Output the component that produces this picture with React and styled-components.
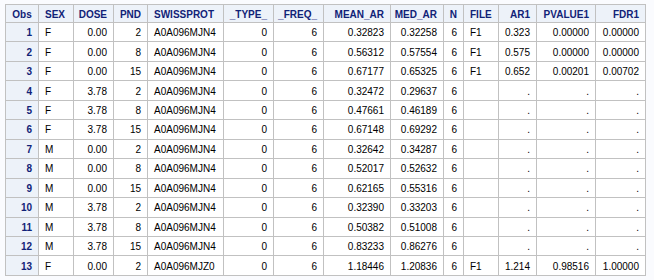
import React from "react";
import styled, { createGlobalStyle } from "styled-components";

const Global = createGlobalStyle`
  html, body { margin: 0; padding: 0; background: #fafbfe; }
  body { font-family: "Liberation Sans", Arial, sans-serif; }
`;

const Page = styled.div`
  padding: 4px 5px;
`;

const Table = styled.div`
  display: grid;
  grid-template-columns: 33px 35px 40px 34px 76px 50px 50px 67px 53px 20px 35px 38px 59px 50px;
  grid-template-rows: 18px repeat(13, 19.46px);
  width: max-content;
  border-left: 1px solid #c1c1c1;
  border-top: 1px solid #c1c1c1;
  background: #ffffff;
`;

const Cell = styled.div`
  box-sizing: border-box;
  border-right: 1px solid #c1c1c1;
  border-bottom: 1px solid #c1c1c1;
  display: flex;
  align-items: center;
  justify-content: ${(p) =>
    p.$align === "left" ? "flex-start" : p.$align === "center" ? "center" : "flex-end"};
  padding: 1px 6px 0 6px;
  font-size: 10px;
  white-space: nowrap;
  overflow: hidden;
  background: ${(p) => (p.$head ? "#edf2f9" : "#ffffff")};
  color: ${(p) => (p.$head ? "#112277" : "#000000")};
  font-weight: ${(p) => (p.$head ? "bold" : "normal")};
`;

const columns = [
  { key: "Obs", align: "center" },
  { key: "SEX", align: "left" },
  { key: "DOSE", align: "right" },
  { key: "PND", align: "right" },
  { key: "SWISSPROT", align: "left" },
  { key: "_TYPE_", align: "right" },
  { key: "_FREQ_", align: "right" },
  { key: "MEAN_AR", align: "right" },
  { key: "MED_AR", align: "right" },
  { key: "N", align: "right" },
  { key: "FILE", align: "left" },
  { key: "AR1", align: "right" },
  { key: "PVALUE1", align: "right" },
  { key: "FDR1", align: "right" },
];

const rows = [
  ["1", "F", "0.00", "2", "A0A096MJN4", "0", "6", "0.32823", "0.32258", "6", "F1", "0.323", "0.00000", "0.00000"],
  ["2", "F", "0.00", "8", "A0A096MJN4", "0", "6", "0.56312", "0.57554", "6", "F1", "0.575", "0.00000", "0.00000"],
  ["3", "F", "0.00", "15", "A0A096MJN4", "0", "6", "0.67177", "0.65325", "6", "F1", "0.652", "0.00201", "0.00702"],
  ["4", "F", "3.78", "2", "A0A096MJN4", "0", "6", "0.32472", "0.29637", "6", "", ".", ".", "."],
  ["5", "F", "3.78", "8", "A0A096MJN4", "0", "6", "0.47661", "0.46189", "6", "", ".", ".", "."],
  ["6", "F", "3.78", "15", "A0A096MJN4", "0", "6", "0.67148", "0.69292", "6", "", ".", ".", "."],
  ["7", "M", "0.00", "2", "A0A096MJN4", "0", "6", "0.32642", "0.34287", "6", "", ".", ".", "."],
  ["8", "M", "0.00", "8", "A0A096MJN4", "0", "6", "0.52017", "0.52632", "6", "", ".", ".", "."],
  ["9", "M", "0.00", "15", "A0A096MJN4", "0", "6", "0.62165", "0.55316", "6", "", ".", ".", "."],
  ["10", "M", "3.78", "2", "A0A096MJN4", "0", "6", "0.32390", "0.33203", "6", "", ".", ".", "."],
  ["11", "M", "3.78", "8", "A0A096MJN4", "0", "6", "0.50382", "0.51008", "6", "", ".", ".", "."],
  ["12", "M", "3.78", "15", "A0A096MJN4", "0", "6", "0.83233", "0.86276", "6", "", ".", ".", "."],
  ["13", "F", "0.00", "2", "A0A096MJZ0", "0", "6", "1.18446", "1.20836", "6", "F1", "1.214", "0.98516", "1.00000"],
];

export default function App() {
  return (
    <Page>
      <Global />
      <Table>
        {columns.map((c) => (
          <Cell key={"h" + c.key} $head $align={c.align}>
            {c.key}
          </Cell>
        ))}
        {rows.map((r, i) =>
          r.map((v, j) => (
            <Cell
              key={i + "-" + j}
              $head={j === 0}
              $align={j === 0 ? "right" : columns[j].align}
            >
              {v}
            </Cell>
          ))
        )}
      </Table>
    </Page>
  );
}
